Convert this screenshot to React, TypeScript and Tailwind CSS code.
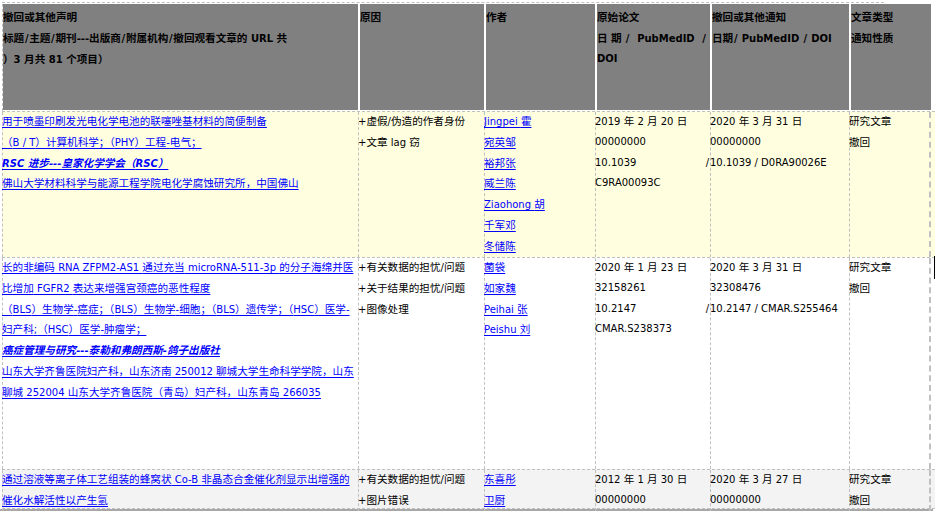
const dash = "border-l border-dashed border-[#c0c0c0]";

type Line = string | { text: string; italic?: boolean; split?: boolean };

// CJK runs in the shot come out a bit larger than the latin around them
function Mixed({ text }: { text: string }) {
  const parts = text.split(/([\u3000-\u9fff\uff00-\uffef]+)/);
  return (
    <>
      {parts.map((part, i) =>
        i % 2 === 1 ? (
          <span key={i} className="text-[10.6px]">
            {part}
          </span>
        ) : (
          part
        )
      )}
    </>
  );
}

// bold slashes sit wider than DejaVu's in the header row
function HeaderLine({ text }: { text: string }) {
  const parts = text.split("/");
  return (
    <div className="h-[20.8px] whitespace-pre">
      {parts.map((part, i) => (
        <span key={i}>
          {i > 0 ? <span className="mx-[0.7px]">/</span> : null}
          <Mixed text={part} />
        </span>
      ))}
    </div>
  );
}

function Links({ lines }: { lines: Line[] }) {
  return (
    <div className="-ml-px -mt-px overflow-hidden">
      {lines.map((line, i) => {
        const item = typeof line === "string" ? { text: line } : line;
        return (
          <div key={i} className="h-[20.8px] whitespace-nowrap">
            <a
              href="#"
              className={`text-[#0000ff] underline underline-offset-2 ${
                item.italic ? "font-bold italic" : ""
              }`}
            >
              <Mixed text={item.text} />
            </a>
          </div>
        );
      })}
    </div>
  );
}

function Plain({ lines }: { lines: Line[] }) {
  return (
    <div className="-ml-px -mt-px">
      {lines.map((line, i) => {
        const item = typeof line === "string" ? { text: line } : line;
        if (item.split) {
          return (
            <div key={i} className="flex h-[20.8px] justify-between pr-px">
              <span>{item.text}</span>
              <span>/</span>
            </div>
          );
        }
        return (
          <div key={i} className="h-[20.8px] whitespace-nowrap">
            <Mixed text={item.text} />
          </div>
        );
      })}
    </div>
  );
}

const rows = [
  {
    height: "h-[146px]",
    bg: "bg-[#ffffe0]",
    title: [
      "用于喷墨印刷发光电化学电池的联噻唑基材料的简便制备",
      "（B / T）计算机科学；（PHY）工程-电气；",
      { text: "RSC 进步---皇家化学学会（RSC）", italic: true },
      "佛山大学材料科学与能源工程学院电化学腐蚀研究所，中国佛山",
    ],
    reasons: ["+虚假/伪造的作者身份", "+文章 lag 窃"],
    authors: ["Jingpei 霍", "宛英邹", "裕邦张", "威兰陈", "Ziaohong 胡", "千军邓", "冬储陈"],
    original: ["2019 年 2 月 20 日", "00000000", { text: "10.1039", split: true }, "C9RA00093C"],
    notice: ["2020 年 3 月 31 日", "00000000", "10.1039 / D0RA90026E"],
    kind: ["研究文章", "撤回"],
  },
  {
    height: "h-[212px]",
    bg: "bg-white",
    title: [
      "长的非编码 RNA ZFPM2-AS1 通过充当 microRNA-511-3p 的分子海绵并医",
      "比增加 FGFR2 表达来增强宫颈癌的恶性程度",
      "（BLS）生物学-癌症；（BLS）生物学-细胞；（BLS）遗传学；（HSC）医学-",
      "妇产科;（HSC）医学-肿瘤学；",
      { text: "癌症管理与研究---泰勒和弗朗西斯-鸽子出版社", italic: true },
      "山东大学齐鲁医院妇产科，山东济南 250012 聊城大学生命科学学院，山东",
      "聊城 252004 山东大学齐鲁医院（青岛）妇产科，山东青岛 266035",
    ],
    reasons: ["+有关数据的担忧/问题", "+关于结果的担忧/问题", "+图像处理"],
    authors: ["菌袋", "如家魏", "Peihai 张", "Peishu 刘"],
    original: ["2020 年 1 月 23 日", "32158261", { text: "10.2147", split: true }, "CMAR.S238373"],
    notice: ["2020 年 3 月 31 日", "32308476", "10.2147 / CMAR.S255464"],
    kind: ["研究文章", "撤回"],
  },
  {
    height: "h-[40px] border-b",
    bg: "bg-[#f3f3f3]",
    title: ["通过溶液等离子体工艺组装的蜂窝状 Co-B 非晶态合金催化剂显示出增强的", "催化水解活性以产生氢"],
    reasons: ["+有关数据的担忧/问题", "+图片错误"],
    authors: ["东喜彤", "卫厨"],
    original: ["2012 年 1 月 30 日", "00000000"],
    notice: ["2020 年 3 月 27 日", "00000000"],
    kind: ["研究文章", "撤回"],
  },
];

const headers: string[][] = [
  ["撤回或其他声明", "标题/主题/期刊---出版商/附属机构/撤回观看文章的 URL 共", "）3 月共 81 个项目）"],
  ["原因"],
  ["作者"],
  ["原始论文", "日 期 /  PubMedID  /", "DOI"],
  ["撤回或其他通知", "日期/ PubMedID / DOI"],
  ["文章类型", "通知性质"],
];

const columns = "grid grid-cols-[356px_126px_111px_115px_139px_82px]";

export default function App() {
  return (
    <div
      className="relative h-[512px] w-[935px] overflow-hidden bg-white pl-[2px] pt-[2px] text-[10px] leading-[20.8px] text-black"
      style={{ fontFamily: '"DejaVu Sans", "Noto Sans CJK SC", sans-serif' }}
    >
      <div className="h-[2px] w-[882px] border-t border-dashed border-[#c0c0c0]" />
      <div className={`${columns} h-[107px]`}>
        {headers.map((lines, i) => (
          <div key={i} className="border-l-2 border-white first:border-l first:border-dashed first:border-[#c0c0c0]">
            <div className="h-[106px] overflow-hidden bg-[#808080] pt-[3px] font-bold">
              {lines.map((line) => (
                <HeaderLine key={line} text={line} />
              ))}
            </div>
          </div>
        ))}
      </div>
      {rows.map((row, i) => (
        <div
          key={i}
          className={`${columns} ${row.height} ${row.bg} border-t border-dashed border-[#c0c0c0]`}
        >
          <div className={`${dash} min-w-0`}>
            <Links lines={row.title} />
          </div>
          <div className={`${dash} min-w-0`}>
            <Plain lines={row.reasons} />
          </div>
          <div className={`${dash} min-w-0`}>
            <Links lines={row.authors} />
          </div>
          <div className={`${dash} min-w-0`}>
            <Plain lines={row.original} />
          </div>
          <div className={`${dash} min-w-0`}>
            <Plain lines={row.notice} />
          </div>
          <div className={`${dash} min-w-0 border-r-2`}>
            <Plain lines={row.kind} />
          </div>
        </div>
      ))}
      <div className="-ml-[2px] h-[2px] w-[933px] bg-[#a8a8a8]" />
      <div className="absolute left-[934px] top-[256px] h-[23px] w-px bg-black" />
    </div>
  );
}
